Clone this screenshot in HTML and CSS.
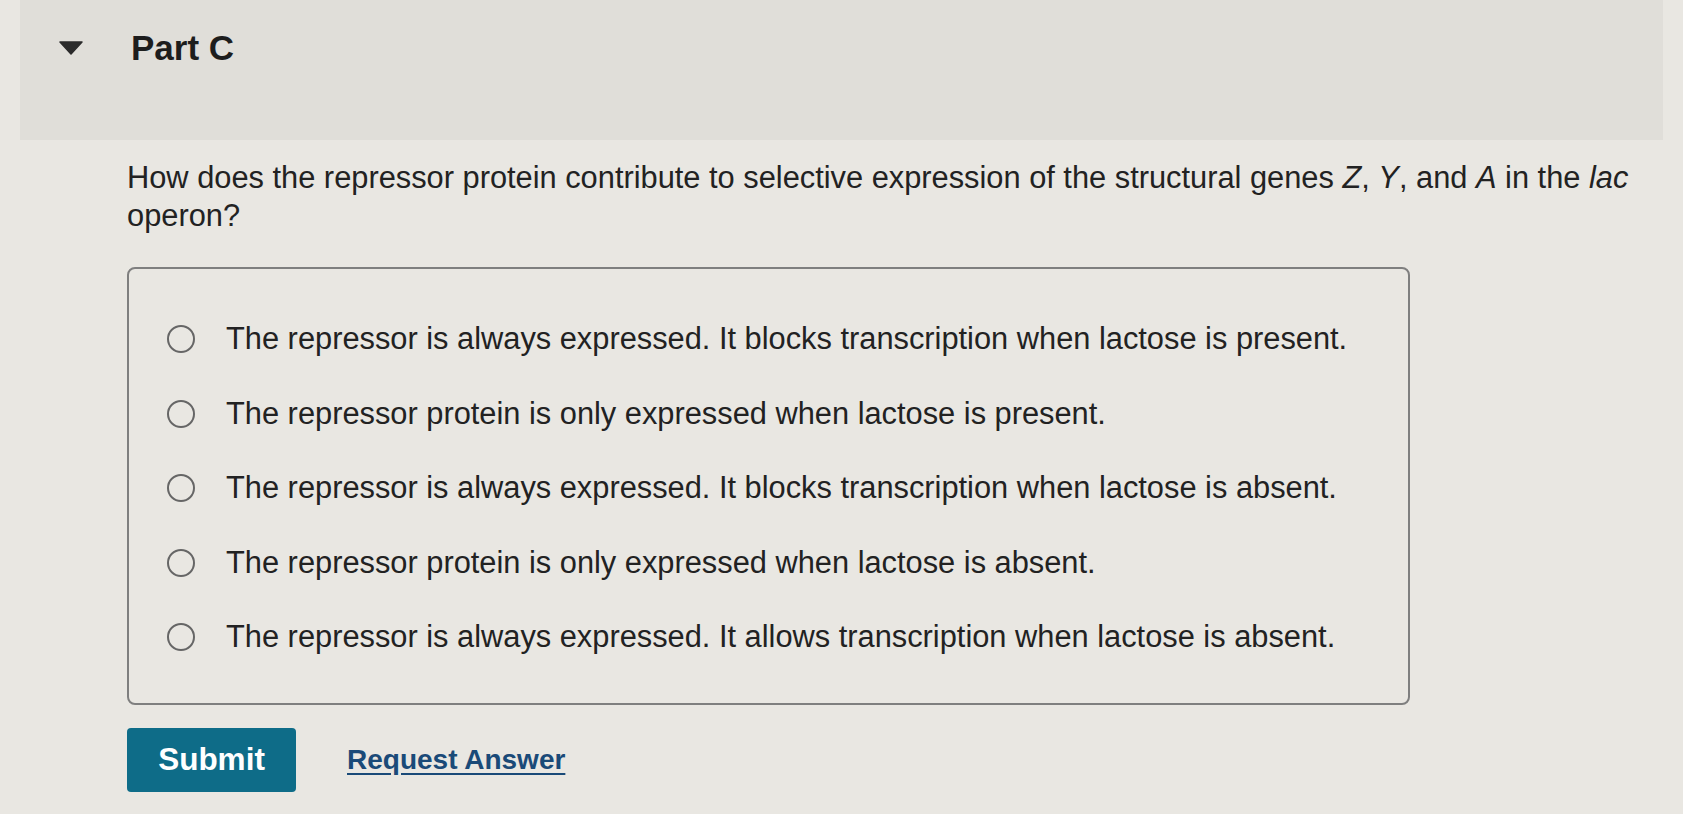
FILE: index.html
```html
<!DOCTYPE html>
<html lang="en">
<head>
    <meta charset="UTF-8">
    <meta name="viewport" content="width=device-width, initial-scale=1.0">
    <title>Part C</title>
    <link rel="stylesheet" href="styles.css">
</head>
<body>
    <div class="part">
        <!-- Part header -->
        <div class="part-header">
            <svg class="toggle" width="24" height="14" viewBox="0 0 24 14">
                <polygon points="1,1 23,1 12,13" fill="#2b2b2b" stroke="#2b2b2b" stroke-width="1.5" stroke-linejoin="round"/>
            </svg>
            <h2>Part C</h2>
        </div>

        <div class="part-body">
            <p class="question">
                How does the repressor protein contribute to selective expression of the structural genes <i>Z</i>, <i>Y</i>, and <i>A</i> in the <i>lac</i> operon?
            </p>

            <!-- Answer choices -->
            <div class="choices">
                <label class="choice"><span class="radio"></span>The repressor is always expressed. It blocks transcription when lactose is present.</label>
                <label class="choice"><span class="radio"></span>The repressor protein is only expressed when lactose is present.</label>
                <label class="choice"><span class="radio"></span>The repressor is always expressed. It blocks transcription when lactose is absent.</label>
                <label class="choice"><span class="radio"></span>The repressor protein is only expressed when lactose is absent.</label>
                <label class="choice"><span class="radio"></span>The repressor is always expressed. It allows transcription when lactose is absent.</label>
            </div>

            <div class="actions">
                <button class="submit">Submit</button>
                <a href="#" class="request">Request Answer</a>
            </div>
        </div>
    </div>
</body>
</html>
```

FILE: styles.css
```css
body {
    font-family: 'Liberation Sans', Arial, sans-serif;
    margin: 0;
    padding: 0;
    background-color: #e9e7e2;
    color: #222;
}

.part {
    margin-left: 20px;
    width: 1643px;
}

.part-header {
    display: flex;
    align-items: flex-start;
    height: 140px;
    padding-left: 39px;
    box-sizing: border-box;
    background-color: #e0ded9;
}

.toggle {
    margin-top: 41px;
    margin-right: 48px;
}

.part-header h2 {
    margin: 28px 0 0;
    font-size: 35px;
    font-weight: bold;
    color: #1d1d1d;
}

.part-body {
    padding-left: 107px;
}

.question {
    margin: 19px 0 0;
    font-size: 30.8px;
    line-height: 38px;
}

.choices {
    margin-top: 32px;
    width: 1283px;
    box-sizing: border-box;
    border: 2px solid #7f7f7f;
    border-radius: 8px;
    padding: 33px 0 28px 38px;
}

.choice {
    display: flex;
    align-items: center;
    height: 74.5px;
    font-size: 30.8px;
    cursor: pointer;
}

.radio {
    width: 24px;
    height: 24px;
    border: 2px solid #666;
    border-radius: 50%;
    margin-right: 31px;
    flex-shrink: 0;
}

.actions {
    display: flex;
    align-items: center;
    margin-top: 23px;
}

.submit {
    width: 169px;
    height: 64px;
    background-color: #0e6c88;
    color: white;
    border: none;
    border-radius: 4px;
    font-family: inherit;
    font-size: 31.5px;
    font-weight: bold;
    cursor: pointer;
}

.request {
    margin-left: 51px;
    font-size: 28px;
    font-weight: bold;
    color: #1a4a78;
    text-decoration: underline;
    text-underline-offset: 4px;
}
```
